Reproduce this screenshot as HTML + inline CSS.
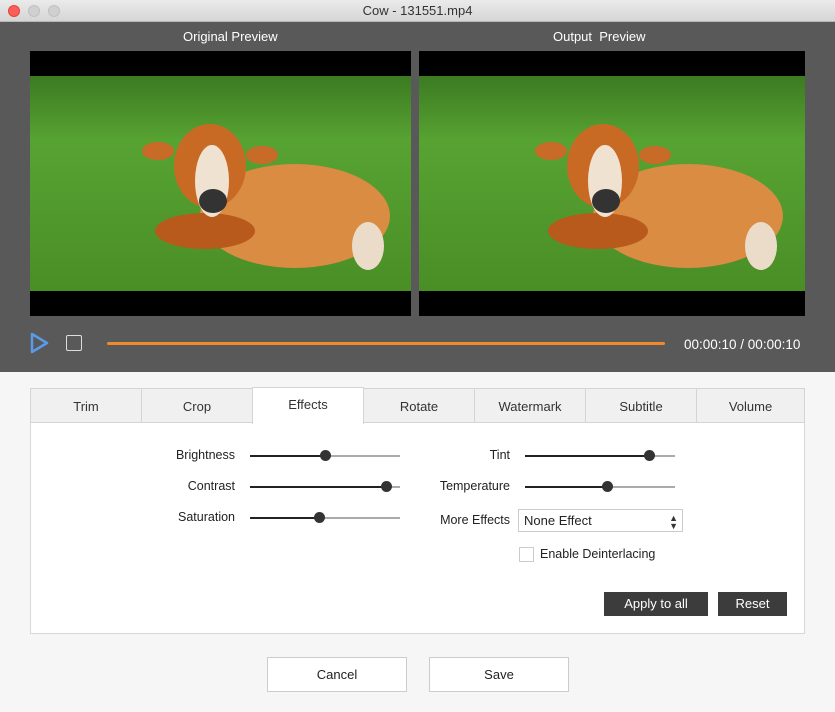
<!DOCTYPE html>
<html><head><style>
*{margin:0;padding:0;box-sizing:border-box}
body{width:835px;height:712px;background:#f6f6f6;font-family:"Liberation Sans",sans-serif;position:relative;overflow:hidden;font-size:12px;color:#222}
.a{position:absolute}
.title{left:0;top:0;width:835px;height:22px;background:linear-gradient(#ebebeb,#d6d6d6);border-bottom:1px solid #b8b8b8;text-align:center;line-height:22px;font-size:13px;color:#333}
.dot{width:12px;height:12px;border-radius:50%;top:5px;background:#d0d0d0;border:1px solid #c0c0c0}
.dark{left:0;top:22px;width:835px;height:350px;background:#595959}
.lbl{color:#fff;font-size:13px;top:29px}
.vid{top:51px;height:265px;background:#000;overflow:hidden}
.tabs{top:388px;left:30px;width:775px;height:35px}
.tab{top:0;height:35px;background:#f0f0f0;border:1px solid #d4d4d4;text-align:center;line-height:36px;font-size:13px;color:#333}
.panel{left:30px;top:422px;width:775px;height:212px;background:#fff;border:1px solid #d8d8d8;border-top:none}
.sl{height:2px;background:#aaa}
.slf{height:2px;background:#222}
.kn{width:11px;height:11px;border-radius:50%;background:#333}
.r{text-align:right;font-size:12.5px;color:#222}
.btn{background:#3c3c3c;color:#fff;text-align:center;font-size:13px;line-height:23px}
.wb{background:#fff;border:1px solid #ccc;text-align:center;font-size:13px;line-height:33px;color:#222;top:657px;width:140px;height:35px}
</style></head><body>
<div class="a title">Cow - 131551.mp4</div>
<div class="a dot" style="left:8px;background:#fc5f57;border-color:#e0443e"></div>
<div class="a dot" style="left:28px"></div>
<div class="a dot" style="left:48px"></div>
<div class="a dark"></div>
<div class="a lbl" style="left:183px">Original Preview</div>
<div class="a lbl" style="left:553px">Output&nbsp; Preview</div>
<div class="a vid" style="left:30px;width:381px"><svg width="381" height="265"><defs><linearGradient id="g" x1="0" y1="0" x2="0" y2="1"><stop offset="0" stop-color="#3c7a22"/><stop offset=".3" stop-color="#57a332"/><stop offset="1" stop-color="#4a8e26"/></linearGradient></defs>
<rect y="25" width="381" height="215" fill="url(#g)"/>
<ellipse cx="265" cy="165" rx="95" ry="52" fill="#d98c42"/><ellipse cx="338" cy="195" rx="16" ry="24" fill="#eadcc8"/>
<ellipse cx="175" cy="180" rx="50" ry="18" fill="#b85a1c"/>
<ellipse cx="180" cy="115" rx="36" ry="42" fill="#c96a24"/><ellipse cx="182" cy="130" rx="17" ry="36" fill="#f0e2d0"/>
<ellipse cx="183" cy="150" rx="14" ry="12" fill="#333"/>
<ellipse cx="128" cy="100" rx="16" ry="9" fill="#c86a28"/><ellipse cx="232" cy="104" rx="16" ry="9" fill="#c86a28"/></svg></div>
<div class="a vid" style="left:419px;width:386px"><svg width="386" height="265">
<rect y="25" width="386" height="215" fill="url(#g)"/>
<ellipse cx="269" cy="165" rx="95" ry="52" fill="#d98c42"/><ellipse cx="342" cy="195" rx="16" ry="24" fill="#eadcc8"/>
<ellipse cx="179" cy="180" rx="50" ry="18" fill="#b85a1c"/>
<ellipse cx="184" cy="115" rx="36" ry="42" fill="#c96a24"/><ellipse cx="186" cy="130" rx="17" ry="36" fill="#f0e2d0"/>
<ellipse cx="187" cy="150" rx="14" ry="12" fill="#333"/>
<ellipse cx="132" cy="100" rx="16" ry="9" fill="#c86a28"/><ellipse cx="236" cy="104" rx="16" ry="9" fill="#c86a28"/></svg></div>
<svg class="a" style="left:28px;top:331px" width="24" height="24"><path d="M4 3 L19 12 L4 21 Z" fill="none" stroke="#5a9ae8" stroke-width="2.5" stroke-linejoin="round"/></svg>
<div class="a" style="left:66px;top:335px;width:16px;height:16px;border:1.5px solid #ddd;border-radius:2px"></div>
<div class="a" style="left:107px;top:342px;width:558px;height:3px;background:#f28a2c;border-radius:2px"></div>
<div class="a" style="left:684px;top:337px;color:#fff;font-size:13.5px">00:00:10 / 00:00:10</div>
<div class="a panel"></div>
<div class="a tabs">
<div class="a tab" style="left:0;width:112px">Trim</div>
<div class="a tab" style="left:111px;width:112px">Crop</div>
<div class="a tab" style="left:222px;top:-1px;width:112px;height:37px;background:#fff;border-bottom:none;line-height:34px">Effects</div>
<div class="a tab" style="left:333px;width:112px">Rotate</div>
<div class="a tab" style="left:444px;width:112px">Watermark</div>
<div class="a tab" style="left:555px;width:112px">Subtitle</div>
<div class="a tab" style="left:666px;width:109px">Volume</div>
</div>
<div class="a r" style="left:140px;top:448px;width:95px">Brightness</div>
<div class="a r" style="left:140px;top:479px;width:95px">Contrast</div>
<div class="a r" style="left:140px;top:510px;width:95px">Saturation</div>
<div class="a r" style="left:420px;top:448px;width:90px">Tint</div>
<div class="a r" style="left:420px;top:479px;width:90px">Temperature</div>
<div class="a r" style="left:420px;top:513px;width:90px">More Effects</div>
<div class="a sl" style="left:250px;top:455px;width:150px"></div><div class="a slf" style="left:250px;top:455px;width:75px"></div><div class="a kn" style="left:320px;top:450px"></div>
<div class="a sl" style="left:250px;top:486px;width:150px"></div><div class="a slf" style="left:250px;top:486px;width:136px"></div><div class="a kn" style="left:381px;top:481px"></div>
<div class="a sl" style="left:250px;top:517px;width:150px"></div><div class="a slf" style="left:250px;top:517px;width:69px"></div><div class="a kn" style="left:314px;top:512px"></div>
<div class="a sl" style="left:525px;top:455px;width:150px"></div><div class="a slf" style="left:525px;top:455px;width:124px"></div><div class="a kn" style="left:644px;top:450px"></div>
<div class="a sl" style="left:525px;top:486px;width:150px"></div><div class="a slf" style="left:525px;top:486px;width:82px"></div><div class="a kn" style="left:602px;top:481px"></div>
<div class="a" style="left:518px;top:509px;width:165px;height:23px;border:1px solid #ccc;background:#fff;font-size:13px;line-height:22px;padding-left:5px">None Effect<span class="a" style="right:4px;font-size:9px;line-height:8px;top:4px;color:#333">▲<br>▼</span></div>
<div class="a" style="left:519px;top:547px;width:15px;height:15px;border:1px solid #ccc;background:#fff"></div>
<div class="a" style="left:540px;top:547px;font-size:12.5px">Enable Deinterlacing</div>
<div class="a btn" style="left:604px;top:592px;width:104px;height:24px">Apply to all</div>
<div class="a btn" style="left:718px;top:592px;width:69px;height:24px">Reset</div>
<div class="a wb" style="left:267px">Cancel</div>
<div class="a wb" style="left:429px">Save</div>
</body></html>
